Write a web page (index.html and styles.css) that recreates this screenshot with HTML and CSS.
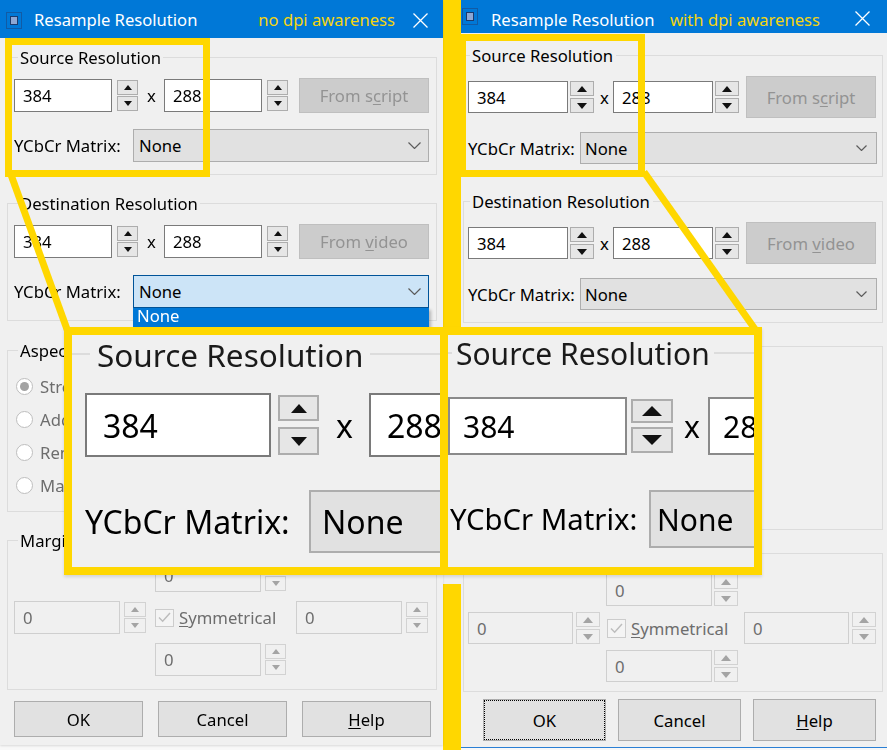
FILE: index.html
```html
<!DOCTYPE html>
<html>
<head>
<meta charset="utf-8">
<title>Resample Resolution</title>
<link rel="stylesheet" href="styles.css">
</head>
<body>
<div class="screen">

  <section class="dlg dlg-l">
    <header class="titlebar">
      <svg class="appicon" viewBox="0 0 16 17"><rect x="0.5" y="0.5" width="15" height="16" fill="none" stroke="#223f73" stroke-dasharray="1 1"/><rect x="4.5" y="4.5" width="7" height="8" fill="#8ea7d4" stroke="#1d3a6c"/></svg>
      <span class="title">Resample Resolution</span>
      <span class="note">no dpi awareness</span>
      <svg class="close" viewBox="0 0 15 15"><path d="M0.5 0.5L14.5 14.5M14.5 0.5L0.5 14.5"/></svg>
    </header>
    <div class="body">
      <div class="group g1">
        <div class="legend">Source Resolution</div>
        <div class="row r1">
          <div class="edit">384</div>
          <div class="spin"><span class="sb up"></span><span class="sb dn"></span></div>
          <span class="times">x</span>
          <div class="edit">288</div>
          <div class="spin"><span class="sb up"></span><span class="sb dn"></span></div>
          <div class="btn off"><span>From s<u>c</u>ript</span></div>
        </div>
        <div class="row r2">
          <span class="lbl">YCbCr Matrix:</span>
          <div class="combo"><span class="cv">None</span><svg class="chev" viewBox="0 0 13 7"><polyline points="0.5,0.5 6.5,6.5 12.5,0.5"/></svg></div>
        </div>
      </div>

      <div class="group g2">
        <div class="legend">Destination Resolution</div>
        <div class="row r1">
          <div class="edit">384</div>
          <div class="spin"><span class="sb up"></span><span class="sb dn"></span></div>
          <span class="times">x</span>
          <div class="edit">288</div>
          <div class="spin"><span class="sb up"></span><span class="sb dn"></span></div>
          <div class="btn off"><span>From <u>v</u>ideo</span></div>
        </div>
        <div class="row r2">
          <span class="lbl">YCbCr Matrix:</span>
          <div class="combo focus"><span class="cv">None</span><svg class="chev" viewBox="0 0 13 7"><polyline points="0.5,0.5 6.5,6.5 12.5,0.5"/></svg>
            <div class="dropdown"><div class="ditem">None</div></div>
          </div>
        </div>
      </div>

      <div class="group g3">
        <div class="legend">Aspect Ratio</div>
        <div class="radios">
          <div class="radio on"><span class="rb"></span><span>Stretch</span></div>
          <div class="radio"><span class="rb"></span><span>Add borders</span></div>
          <div class="radio"><span class="rb"></span><span>Remove borders</span></div>
          <div class="radio"><span class="rb"></span><span>Maintain</span></div>
        </div>
      </div>

      <div class="group g4">
        <div class="legend">Margins</div>
        <div class="mgrid">
          <div class="cell c2 rA"><div class="edit off">0</div><div class="spin off"><span class="sb up"></span><span class="sb dn"></span></div></div>
          <div class="cell c1 rB"><div class="edit off">0</div><div class="spin off"><span class="sb up"></span><span class="sb dn"></span></div></div>
          <div class="cell c2 rB chk"><span class="cb"><svg viewBox="0 0 14 12"><polyline points="1,6 5,10 13,1"/></svg></span><span class="cbl"><u>S</u>ymmetrical</span></div>
          <div class="cell c3 rB"><div class="edit off">0</div><div class="spin off"><span class="sb up"></span><span class="sb dn"></span></div></div>
          <div class="cell c2 rC"><div class="edit off">0</div><div class="spin off"><span class="sb up"></span><span class="sb dn"></span></div></div>
        </div>
      </div>

      <div class="buttons">
        <div class="btn"><span>OK</span></div>
        <div class="btn"><span>Cancel</span></div>
        <div class="btn"><span><u>H</u>elp</span></div>
      </div>
    </div>
  </section>

  <div class="sep"></div>

  <section class="dlg dlg-r">
    <header class="titlebar">
      <svg class="appicon" viewBox="0 0 16 17"><rect x="0.5" y="0.5" width="15" height="16" fill="none" stroke="#223f73" stroke-dasharray="1 1"/><rect x="4.5" y="4.5" width="7" height="8" fill="#8ea7d4" stroke="#1d3a6c"/></svg>
      <span class="title">Resample Resolution</span>
      <span class="note">with dpi awareness</span>
      <svg class="close" viewBox="0 0 15 15"><path d="M0.5 0.5L14.5 14.5M14.5 0.5L0.5 14.5"/></svg>
    </header>
    <div class="body">
      <div class="group g1">
        <div class="legend">Source Resolution</div>
        <div class="row r1">
          <div class="edit">384</div>
          <div class="spin"><span class="sb up"></span><span class="sb dn"></span></div>
          <span class="times">x</span>
          <div class="edit">288</div>
          <div class="spin"><span class="sb up"></span><span class="sb dn"></span></div>
          <div class="btn off"><span>From s<u>c</u>ript</span></div>
        </div>
        <div class="row r2">
          <span class="lbl">YCbCr Matrix:</span>
          <div class="combo"><span class="cv">None</span><svg class="chev" viewBox="0 0 11 6"><polyline points="0.5,0.5 5.5,5.5 10.5,0.5"/></svg></div>
        </div>
      </div>

      <div class="group g2">
        <div class="legend">Destination Resolution</div>
        <div class="row r1">
          <div class="edit">384</div>
          <div class="spin"><span class="sb up"></span><span class="sb dn"></span></div>
          <span class="times">x</span>
          <div class="edit">288</div>
          <div class="spin"><span class="sb up"></span><span class="sb dn"></span></div>
          <div class="btn off"><span>From <u>v</u>ideo</span></div>
        </div>
        <div class="row r2">
          <span class="lbl">YCbCr Matrix:</span>
          <div class="combo"><span class="cv">None</span><svg class="chev" viewBox="0 0 11 6"><polyline points="0.5,0.5 5.5,5.5 10.5,0.5"/></svg></div>
        </div>
      </div>

      <div class="group g3">
        <div class="legend">Aspect Ratio</div>
        <div class="radios">
          <div class="radio on"><span class="rb"></span><span>Stretch</span></div>
          <div class="radio"><span class="rb"></span><span>Add borders</span></div>
          <div class="radio"><span class="rb"></span><span>Remove borders</span></div>
          <div class="radio"><span class="rb"></span><span>Maintain</span></div>
        </div>
      </div>

      <div class="group g4">
        <div class="legend">Margins</div>
        <div class="mgrid">
          <div class="cell c2 rA"><div class="edit off">0</div><div class="spin off"><span class="sb up"></span><span class="sb dn"></span></div></div>
          <div class="cell c1 rB"><div class="edit off">0</div><div class="spin off"><span class="sb up"></span><span class="sb dn"></span></div></div>
          <div class="cell c2 rB chk"><span class="cb"><svg viewBox="0 0 14 12"><polyline points="1,6 5,10 13,1"/></svg></span><span class="cbl"><u>S</u>ymmetrical</span></div>
          <div class="cell c3 rB"><div class="edit off">0</div><div class="spin off"><span class="sb up"></span><span class="sb dn"></span></div></div>
          <div class="cell c2 rC"><div class="edit off">0</div><div class="spin off"><span class="sb up"></span><span class="sb dn"></span></div></div>
        </div>
      </div>

      <div class="buttons">
        <div class="btn default"><span>OK</span></div>
        <div class="btn"><span>Cancel</span></div>
        <div class="btn"><span><u>H</u>elp</span></div>
      </div>
    </div>
  </section>

  <div class="hl hl-l"></div>
  <div class="hl hl-r"></div>

  <svg class="links" viewBox="0 0 887 750">
    <line x1="10" y1="172" x2="68" y2="332"/>
    <line x1="644" y1="172" x2="757" y2="332"/>
  </svg>

  <div class="mag">
    <div class="mpane mpl">
      <div class="mgroup">
        <div class="mlegend">Source Resolution</div>
        <div class="mrow mr1">
          <div class="medit">384</div>
          <div class="mspin"><span class="sb up"></span><span class="sb dn"></span></div>
          <span class="mtimes">x</span>
          <div class="medit">288</div>
        </div>
        <div class="mrow mr2">
          <span class="mlbl">YCbCr Matrix:</span>
          <div class="mcombo">None</div>
        </div>
      </div>
    </div>
    <div class="mdiv"></div>
    <div class="mpane mpr">
      <div class="mgroup">
        <div class="mlegend">Source Resolution</div>
        <div class="mrow mr1">
          <div class="medit">384</div>
          <div class="mspin"><span class="sb up"></span><span class="sb dn"></span></div>
          <span class="mtimes">x</span>
          <div class="medit">288</div>
        </div>
        <div class="mrow mr2">
          <span class="mlbl">YCbCr Matrix:</span>
          <div class="mcombo">None</div>
        </div>
      </div>
    </div>
  </div>

</div>
</body>
</html>
```

FILE: styles.css
```css
* { box-sizing: border-box; }
html, body { margin: 0; padding: 0; }
body {
  width: 887px; height: 750px; overflow: hidden;
  background: #f8f8f8;
  font-family: "Noto Sans", "Open Sans", "DejaVu Sans", sans-serif;
  font-size: 16.7px; color: #000;
}
u { text-underline-offset: 2px; text-decoration-thickness: 1px; }

.screen { position: relative; display: flex; align-items: flex-start; width: 887px; height: 750px; }

/* ---------- dialogs ---------- */
.dlg { flex: none; display: flex; flex-direction: column; background: #f0f0f0; --ac: #111; }
.dlg-l { width: 443px; height: 745px; --aw: 4.5px; --ah: 5px; filter: blur(0.3px); box-shadow: 0 1px 2px rgba(0,0,0,.12); }
.dlg-r { width: 426px; height: 748px; border-bottom: 1px solid #2a7fd4; --aw: 5.5px; --ah: 6px; }
.sep {
  flex: none; width: 18px; height: 750px;
  background: linear-gradient(#ffd700 0, #ffd700 575px, #f0f0f0 575px, #f0f0f0 584px, #ffd700 584px);
}

/* title bar */
.titlebar { flex: none; display: flex; align-items: center; background: #0078d7; color: #fff; }
.dlg-l .titlebar { height: 38px; padding: 0 15px 0 6px; }
.dlg-r .titlebar { height: 33px; padding: 0 17px 0 1px; }
.appicon { flex: none; width: 16px; height: 17px; }
.dlg-l .appicon { margin-top: 3px; }
.title, .note { font-size: 16.6px; white-space: nowrap; }
.dlg-l .title { margin-left: 12px; }
.dlg-r .title { margin-left: 13px; padding-top: 6px; }
.note { margin-left: auto; color: #f5d50f; }
.dlg-l .note { margin-right: 18px; }
.dlg-r .note { margin-right: 35px; padding-top: 6px; }
.close { flex: none; width: 15px; height: 15px; fill: none; stroke: #fff; stroke-width: 1.3; }
.dlg-l .close { margin-top: 3px; }
.dlg-r .close { margin-top: 4px; }

/* body & groups */
.body { flex: 1; display: flex; flex-direction: column; }
.dlg-l .body { padding: 0 6px 0 7px; }
.dlg-r .body { padding: 0 4px 0 2px; }
.group { flex: none; border: 1px solid #dcdcdc; }
.legend { width: max-content; background: #f0f0f0; line-height: 22px; margin-top: -11px; white-space: nowrap; }
.dlg-l .legend { margin-left: 4px; padding: 0 2px; }
.dlg-r .legend { margin-left: 2px; padding: 0 3px 0 2px; }

.dlg-l .group { padding: 0 7px 12px 6px; }
.dlg-r .group { padding: 0 5px 12px 4px; }
.dlg-l .g1 { margin-top: 19px; }
.dlg-r .g1 { margin-top: 22px; }
.dlg-l .g2 { margin-top: 28px; }
.dlg-r .g2 { margin-top: 24px; }
.dlg-l .g3 { margin-top: 29px; padding-bottom: 9px; }
.dlg-r .g3 { margin-top: 23px; padding-bottom: 14px; }
.dlg-l .g4 { margin-top: 28px; padding-bottom: 13px; }
.dlg-r .g4 { margin-top: 23px; padding-bottom: 9px; }

.row { display: flex; align-items: center; white-space: nowrap; }
.dlg-l .r1 { margin-top: 9px; height: 35px; }
.dlg-r .r1 { margin-top: 9px; height: 42px; }
.dlg-l .r2 { margin-top: 16px; }
.dlg-r .r2 { margin-top: 14px; }

/* edit boxes */
.edit { flex: none; display: flex; align-items: center; background: #fff; border: 1px solid #7a7a7a; padding-left: 8px; }
.edit.off { background: #f0f0f0; border-color: #cfcfcf; color: #6d6d6d; }
.dlg-l .edit { width: 98px; height: 33px; }
.dlg-r .edit { width: 100px; height: 32px; }

/* spinners */
.spin { flex: none; display: flex; flex-direction: column; justify-content: space-between; }
.sb { display: flex; align-items: center; justify-content: center; background: #e6e6e6; border: 1px solid #adadad; }
.sb::after { content: ""; width: 0; height: 0; border-left: var(--aw) solid transparent; border-right: var(--aw) solid transparent; }
.sb.up::after { border-bottom: var(--ah) solid var(--ac); }
.sb.dn::after { border-top: var(--ah) solid var(--ac); }
.spin.off { --ac: #a4a4a4; }
.spin.off .sb { background: #f0f0f0; border-color: #d2d2d2; }
.dlg-l .spin { width: 21px; height: 31px; margin-left: 5px; }
.dlg-l .sb { height: 15px; }
.dlg-r .spin { width: 24px; height: 32px; margin-left: 2px; }
.dlg-r .sb { height: 15px; }

.times { flex: none; width: 8px; text-align: center; }
.dlg-l .times { margin: 0 9px; }
.dlg-r .times { margin: 0 5px 0 6px; }

/* buttons */
.btn { flex: none; display: flex; align-items: center; justify-content: center; background: #e1e1e1; border: 1px solid #adadad; white-space: nowrap; }
.btn.off { background: #cccccc; border-color: #bfbfbf; color: #939393; }
.dlg-l .r1 .btn { width: 130px; height: 35px; margin-left: 11px; }
.dlg-r .r1 .btn { width: 130px; height: 42px; margin-left: 7px; }
.btn.default { outline: 1px dotted #000; outline-offset: -2px; }

/* combo */
.lbl { flex: none; }
.dlg-l .lbl { width: 119px; }
.dlg-r .lbl { width: 112px; }
.combo { position: relative; flex: 1; display: flex; align-items: center; justify-content: space-between; background: #e1e1e1; border: 1px solid #adadad; }
.dlg-l .combo { height: 33px; padding: 0 7px 0 5px; }
.dlg-r .combo { height: 32px; padding: 0 9px 0 4px; }
.chev { fill: none; stroke: #5c5c5c; stroke-width: 1.2; }
.dlg-l .chev { width: 13px; height: 7px; }
.dlg-r .chev { width: 11px; height: 6px; }
.combo.focus { background: #cce4f7; border-color: #005499; }
.dropdown {
  position: absolute; left: -1px; right: -1px; top: calc(100% + 1px); height: 70px;
  background: #0078d7; box-shadow: 2px 2px 3px rgba(0,0,0,.25);
}
.ditem { color: #fff; padding-left: 4px; line-height: 22px; margin-top: -3px; }

/* radios */
.radio { display: flex; align-items: center; color: #6d6d6d; white-space: nowrap; }
.dlg-l .radios { padding-top: 8px; }
.dlg-l .radio { height: 33px; }
.dlg-r .radios { padding-top: 13px; }
.dlg-r .radio { height: 36px; }
.rb { flex: none; width: 17px; height: 17px; border-radius: 50%; border: 1px solid #bdbdbd; background: #fff; margin: 0 7px 0 2px; display: flex; align-items: center; justify-content: center; }
.radio.on .rb::after { content: ""; width: 9px; height: 9px; border-radius: 50%; background: #a3a3a3; }

/* margins grid */
.mgrid { display: grid; }
.dlg-l .mgrid { margin-top: 7px; grid-template-columns: 141px 141px 132px; grid-template-rows: 33px 33px 33px; row-gap: 9px; }
.dlg-r .mgrid { margin-top: 9px; grid-template-columns: 138px 138px auto; grid-template-rows: 32px 32px 32px; row-gap: 6px; }
.cell { display: flex; align-items: center; white-space: nowrap; }
.c1 { grid-column: 1; } .c2 { grid-column: 2; } .c3 { grid-column: 3; }
.rA { grid-row: 1; } .rB { grid-row: 2; } .rC { grid-row: 3; }
.dlg-l .mgrid .edit { width: 106px; }
.dlg-l .mgrid .spin { margin-left: 4px; width: 22px; }
.dlg-l .mgrid .c2 .spin { width: 21px; }
.dlg-r .mgrid .edit { width: 105px; }
.dlg-r .mgrid .spin { margin-left: 3px; width: 24px; }
.dlg-r .mgrid .c2 .edit { width: 106px; }
.dlg-r .mgrid .c2 .spin { margin-left: 2px; }
.cb { flex: none; display: flex; align-items: center; justify-content: center; background: #f4f4f4; border: 1px solid #cccccc; }
.dlg-l .cb { width: 19px; height: 18px; }
.dlg-r .cb { width: 19px; height: 19px; margin-left: 1px; }
.cb svg { width: 13px; height: 11px; fill: none; stroke: #bdbdbd; stroke-width: 1.6; }
.cbl { color: #6d6d6d; margin-left: 5px; }

/* bottom buttons */
.buttons { display: flex; }
.dlg-l .buttons { margin-top: 11px; padding-left: 7px; gap: 15px; }
.dlg-r .buttons { margin-top: 7px; padding-left: 20px; gap: 12px; }
.dlg-l .buttons .btn { width: 129px; height: 36px; }
.dlg-r .buttons .btn { width: 123px; height: 42px; }

/* ---------- annotations ---------- */
.hl { position: absolute; border: 7px solid #ffd700; }
.hl-l { left: 5px; top: 38px; width: 205px; height: 139px; }
.hl-r { left: 459px; top: 34px; width: 186px; height: 143px; }
.links { position: absolute; left: 0; top: 0; width: 887px; height: 750px; stroke: #ffd700; stroke-width: 7; pointer-events: none; }

/* magnifier */
.mag {
  position: absolute; left: 64px; top: 327px; width: 698px; height: 248px;
  border: 8px solid #ffd700; background: #f0f0f0; display: flex;
  box-shadow: 0 2px 3px rgba(0,0,0,.12);
}
.mpane { position: relative; height: 100%; overflow: hidden; }
.mpl { width: 368px; flex: none; }
.mdiv { flex: none; width: 8px; background: #ffd700; }
.mpr { flex: 1; }
.mgroup { border-top: 2px solid #dcdcdc; }
.mpl .mgroup { margin-top: 18px; filter: blur(0.7px); --aw: 8.5px; --ah: 9px; --ac: #111; }
.mpr .mgroup { margin-top: 17px; --aw: 10px; --ah: 10px; --ac: #111; }
.mlegend { width: max-content; background: #f0f0f0; line-height: 36px; white-space: nowrap; color: #1a1a1a; }
.mpl .mlegend { font-size: 31.5px; margin: -18px 0 0 18px; padding: 0 7px; }
.mpr .mlegend { font-size: 30px; margin: -18px 0 0 4px; padding: 0 4px; }
.mrow { display: flex; align-items: center; white-space: nowrap; }
.medit { flex: none; display: flex; align-items: center; background: #fff; border: 2px solid #7a7a7a; }
.mspin { flex: none; display: flex; flex-direction: column; justify-content: space-between; }
.mspin .sb { border-width: 2px; }
.mtimes { flex: none; text-align: center; }
.mlbl { flex: none; }
.mcombo { flex: none; display: flex; align-items: center; background: #e1e1e1; border: 2px solid #adadad; }

.mpl .mr1 { margin-top: 20px; padding-left: 13px; }
.mpl .medit { width: 186px; height: 64px; font-size: 32px; padding-left: 16px; }
.mpl .mspin { margin-left: 7px; width: 41px; height: 60px; }
.mpl .mspin .up { height: 26px; }
.mpl .mspin .dn { height: 28px; }
.mpl .mtimes { width: 14px; margin: 0 19px 0 17px; font-size: 32px; }
.mpl .mr2 { margin-top: 33px; padding-left: 13px; }
.mpl .mlbl { width: 224px; font-size: 32px; }
.mpl .mcombo { width: 200px; height: 63px; font-size: 32px; padding-left: 11px; }

.mpr .mr1 { margin-top: 25px; }
.mpr .medit { width: 179px; height: 58px; font-size: 30px; padding-left: 13px; border-color: #8a8a8a; }
.mpr .mspin { margin-left: 4px; width: 42px; height: 54px; }
.mpr .mspin .up { height: 24px; }
.mpr .mspin .dn { height: 26px; }
.mpr .mtimes { width: 13px; margin: 0 11px; font-size: 30px; }
.mpr .mr2 { margin-top: 35px; padding-left: 2px; }
.mpr .mlbl { width: 199px; font-size: 29.3px; }
.mpr .mcombo { width: 150px; height: 58px; font-size: 30px; padding-left: 6px; }
```
